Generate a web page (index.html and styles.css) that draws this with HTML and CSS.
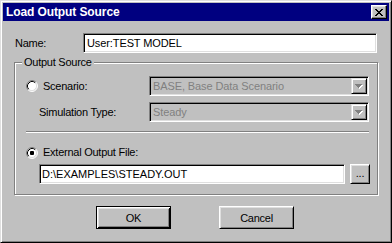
FILE: index.html
```html
<!DOCTYPE html>
<html>
<head>
<meta charset="utf-8">
<link rel="stylesheet" href="styles.css">
</head>
<body>
<div class="window">
  <div class="titlebar">
    <span class="title">Load Output Source</span>
    <span class="close">
      <svg width="8" height="7" viewBox="0 0 8 7"><path fill="#000" d="M0 0h2v1h-2z M6 0h2v1h-2z M1 1h2v1h-2z M5 1h2v1h-2z M2 2h4v1h-4z M3 3h2v1h-2z M2 4h4v1h-4z M1 5h2v1h-2z M5 5h2v1h-2z M0 6h2v1h-2z M6 6h2v1h-2z"/></svg>
    </span>
  </div>
  <div class="content">
    <div class="name-row">
      <span class="name-label">Name:</span>
      <div class="field name-field">User:TEST MODEL</div>
    </div>
    <fieldset class="group">
      <legend class="legend">Output Source</legend>
      <div class="group-body">
        <div class="row row-scenario">
          <span class="radio-label">
            <svg class="radio" width="12" height="12" viewBox="0 0 12 12"><circle cx="6" cy="6" r="5" fill="#fff"/><path d="M2.11 9.89A5.5 5.5 0 0 1 9.89 2.11" stroke="#808080" fill="none"/><path d="M9.89 2.11A5.5 5.5 0 0 1 2.11 9.89" stroke="#fff" fill="none"/><path d="M2.82 9.18A4.5 4.5 0 0 1 9.18 2.82" stroke="#000" fill="none"/><path d="M9.18 2.82A4.5 4.5 0 0 1 2.82 9.18" stroke="#dfdfdf" fill="none"/></svg>
            Scenario:
          </span>
          <div class="combo">
            <span class="combo-text">BASE, Base Data Scenario</span>
            <span class="drop"><svg width="8" height="5" viewBox="0 0 8 5"><path fill="#fff" d="M1 1h7v1h-1v1h-1v1h-1v1h-1v-1h-1v-1h-1v-1h-1z"/><path fill="#808080" d="M0 0h7v1h-1v1h-1v1h-1v1h-1v-1h-1v-1h-1v-1h-1z"/></svg></span>
          </div>
        </div>
        <div class="row row-sim">
          <span class="sim-label">Simulation Type:</span>
          <div class="combo">
            <span class="combo-text">Steady</span>
            <span class="drop"><svg width="8" height="5" viewBox="0 0 8 5"><path fill="#fff" d="M1 1h7v1h-1v1h-1v1h-1v1h-1v-1h-1v-1h-1v-1h-1z"/><path fill="#808080" d="M0 0h7v1h-1v1h-1v1h-1v1h-1v-1h-1v-1h-1v-1h-1z"/></svg></span>
          </div>
        </div>
        <div class="separator"></div>
        <div class="ext-row">
          <span class="radio-label">
            <svg class="radio" width="12" height="12" viewBox="0 0 12 12"><circle cx="6" cy="6" r="5" fill="#fff"/><path d="M2.11 9.89A5.5 5.5 0 0 1 9.89 2.11" stroke="#808080" fill="none"/><path d="M9.89 2.11A5.5 5.5 0 0 1 2.11 9.89" stroke="#fff" fill="none"/><path d="M2.82 9.18A4.5 4.5 0 0 1 9.18 2.82" stroke="#000" fill="none"/><path d="M9.18 2.82A4.5 4.5 0 0 1 2.82 9.18" stroke="#dfdfdf" fill="none"/><rect x="4" y="4" width="4" height="4" rx="1" fill="#000"/></svg>
            External Output File:
          </span>
        </div>
        <div class="path-row">
          <div class="field path-field">D:\EXAMPLES\STEADY.OUT</div>
          <span class="btn browse">...</span>
        </div>
      </div>
    </fieldset>
    <div class="buttons">
      <span class="btn btn-default">OK</span>
      <span class="btn">Cancel</span>
    </div>
  </div>
</div>
</body>
</html>
```

FILE: styles.css
```css
* { box-sizing: border-box; }
body {
  margin: 0;
  font-family: "Liberation Sans", Arial, sans-serif;
  font-size: 11px;
  letter-spacing: -0.25px;
  color: #000;
}
.window {
  width: 392px;
  height: 243px;
  background: #c0c0c0;
  border: 1px solid;
  border-color: #dfdfdf #000 #000 #dfdfdf;
  box-shadow: inset 1px 1px #fff, inset -1px -1px #808080;
  padding: 2px;
}
.titlebar {
  height: 18px;
  background: #000080;
  color: #fff;
  display: flex;
  align-items: center;
  justify-content: space-between;
  padding: 0 2px 0 3px;
}
.title {
  font-weight: bold;
  font-size: 12px;
  letter-spacing: -0.1px;
}
.close {
  width: 16px;
  height: 14px;
  background: #c0c0c0;
  border: 1px solid;
  border-color: #fff #000 #000 #fff;
  box-shadow: inset -1px -1px #808080, inset 1px 1px #dfdfdf;
  display: flex;
  align-items: center;
  justify-content: center;
  padding-right: 1px;
}
.close svg { display: block; }
.content {
  padding: 12px 11px 0 11px;
}
.name-row {
  display: flex;
  align-items: center;
  margin-left: 1px;
  height: 20px;
}
.name-label { width: 68px; }
.field {
  height: 20px;
  background: #fff;
  border: 1px solid;
  border-color: #808080 #fff #fff #808080;
  box-shadow: inset 1px 1px #000, inset -1px -1px #dfdfdf;
  padding-left: 3px;
  display: flex;
  align-items: center;
  white-space: nowrap;
  overflow: hidden;
  letter-spacing: -0.1px;
}
.name-field { width: 294px; }
.path-field { padding-left: 2px; letter-spacing: 0; }
.group {
  margin: 3px 0 0 0;
  padding: 0 8px 10px 7px;
  width: 364px;
  min-width: 0;
  border: 1px solid #808080;
  box-shadow: inset 1px 1px #fff, 1px 1px #fff;
}
.legend {
  padding: 0 2px;
  line-height: 13px;
  background: #c0c0c0;
}
.group-body {
  padding-left: 4px;
}
.row {
  display: flex;
  align-items: center;
  justify-content: space-between;
  height: 20px;
}
.row-scenario { margin-top: 7px; }
.row-sim { margin-top: 6px; }
.sim-label { padding-left: 13px; }
.radio-label {
  display: flex;
  align-items: center;
  gap: 5px;
  line-height: 13px;
}
.radio { display: block; flex: 0 0 auto; }
.combo {
  width: 220px;
  height: 20px;
  background: #c0c0c0;
  color: #808080;
  border: 1px solid;
  border-color: #808080 #fff #fff #808080;
  box-shadow: inset 1px 1px #000, inset -1px -1px #dfdfdf;
  padding: 1px 1px 1px 3px;
  display: flex;
  align-items: center;
  letter-spacing: -0.1px;
}
.combo-text { flex: 1; white-space: nowrap; }
.drop {
  width: 16px;
  height: 16px;
  background: #c0c0c0;
  border: 1px solid;
  border-color: #dfdfdf #000 #000 #dfdfdf;
  box-shadow: inset 1px 1px #fff, inset -1px -1px #808080;
  display: flex;
  align-items: center;
  justify-content: center;
  padding-top: 1px;
}
.drop svg { display: block; }
.separator {
  margin-top: 9px;
  height: 2px;
  border-top: 1px solid #808080;
  border-bottom: 1px solid #fff;
}
.ext-row {
  margin-top: 13px;
  height: 13px;
  display: flex;
  align-items: center;
}
.path-row {
  margin-top: 5px;
  display: flex;
  align-items: center;
  gap: 5px;
  padding-left: 13px;
}
.path-field { flex: 0 0 306px; }
.btn {
  width: 75px;
  height: 23px;
  background: #c0c0c0;
  border: 1px solid;
  border-color: #fff #000 #000 #fff;
  box-shadow: inset 1px 1px #dfdfdf, inset -1px -1px #808080;
  display: flex;
  align-items: center;
  justify-content: center;
  flex: 0 0 auto;
}
.browse {
  width: 20px;
  height: 20px;
  padding-bottom: 2px;
}
.btn-default {
  border: 1px solid #000;
  box-shadow: inset 1px 1px #fff, inset -1px -1px #000, inset 2px 2px #dfdfdf, inset -2px -2px #808080;
}
.buttons {
  display: flex;
  justify-content: center;
  gap: 48px;
  margin-top: 11px;
  padding-right: 2px;
}
```
